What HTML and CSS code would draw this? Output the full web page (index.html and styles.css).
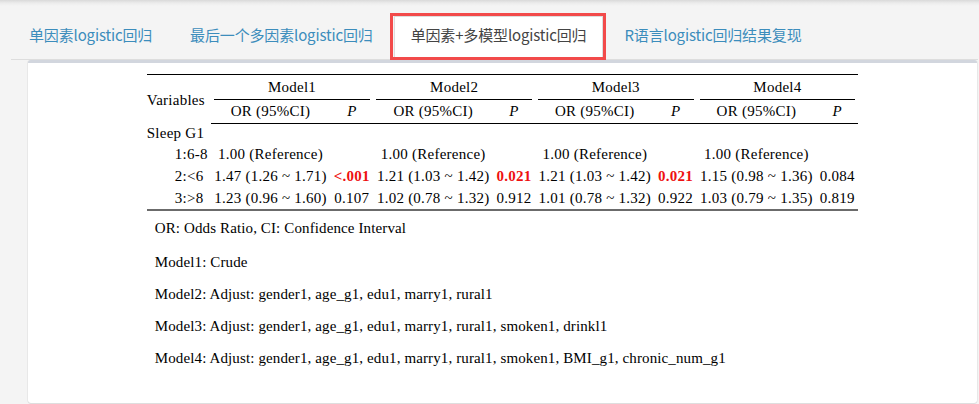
FILE: index.html
```html
<!DOCTYPE html>
<html lang="zh">
<head>
<meta charset="utf-8">
<title>单因素+多模型logistic回归</title>
<link rel="stylesheet" href="styles.css">
</head>
<body>
<div class="page">
  <ul class="tabs">
    <li class="tab">单因素logistic回归</li>
    <li class="tab">最后一个多因素logistic回归</li>
    <li class="tab active">单因素+多模型logistic回归</li>
    <li class="tab">R语言logistic回归结果复现</li>
  </ul>
  <div class="card">
    <div class="report">
      <table class="res">
        <thead>
          <tr class="top">
            <th rowspan="2" class="var">Variables</th>
            <th colspan="2" class="model"><div>Model1</div></th>
            <th colspan="2" class="model"><div>Model2</div></th>
            <th colspan="2" class="model"><div>Model3</div></th>
            <th colspan="2" class="model"><div>Model4</div></th>
          </tr>
          <tr class="sub">
            <th>OR (95%CI)</th><th class="p">P</th>
            <th>OR (95%CI)</th><th class="p">P</th>
            <th>OR (95%CI)</th><th class="p">P</th>
            <th>OR (95%CI)</th><th class="p">P</th>
          </tr>
        </thead>
        <tbody>
          <tr>
            <td class="var">Sleep G1</td>
            <td></td><td></td><td></td><td></td><td></td><td></td><td></td><td></td>
          </tr>
          <tr>
            <td class="lvl">1:6-8</td>
            <td>1.00 (Reference)</td><td></td>
            <td>1.00 (Reference)</td><td></td>
            <td>1.00 (Reference)</td><td></td>
            <td>1.00 (Reference)</td><td></td>
          </tr>
          <tr>
            <td class="lvl">2:&lt;6</td>
            <td>1.47 (1.26 ~ 1.71)</td><td class="sig">&lt;.001</td>
            <td>1.21 (1.03 ~ 1.42)</td><td class="sig">0.021</td>
            <td>1.21 (1.03 ~ 1.42)</td><td class="sig">0.021</td>
            <td>1.15 (0.98 ~ 1.36)</td><td>0.084</td>
          </tr>
          <tr>
            <td class="lvl">3:&gt;8</td>
            <td>1.23 (0.96 ~ 1.60)</td><td>0.107</td>
            <td>1.02 (0.78 ~ 1.32)</td><td>0.912</td>
            <td>1.01 (0.78 ~ 1.32)</td><td>0.922</td>
            <td>1.03 (0.79 ~ 1.35)</td><td>0.819</td>
          </tr>
        </tbody>
      </table>
      <div class="notes">
        <p>OR: Odds Ratio, CI: Confidence Interval</p>
        <p>Model1: Crude</p>
        <p>Model2: Adjust: gender1, age_g1, edu1, marry1, rural1</p>
        <p>Model3: Adjust: gender1, age_g1, edu1, marry1, rural1, smoken1, drinkl1</p>
        <p>Model4: Adjust: gender1, age_g1, edu1, marry1, rural1, smoken1, BMI_g1, chronic_num_g1</p>
      </div>
    </div>
  </div>
</div>
</body>
</html>
```
FILE: styles.css
```css
html, body {
  margin: 0;
  padding: 0;
}
body {
  background: linear-gradient(#d9d9d9 0, #ececec 3px, #f4f4f4 6px);
  background-color: #f4f4f4;
  height: 404px;
  overflow: hidden;
  font-family: "Noto Sans CJK SC", "Noto Sans", sans-serif;
}
.page {
  padding: 16px 1px 0 11px;
}
.tabs {
  list-style: none;
  margin: 0;
  padding: 0 0 0 1px;
  display: flex;
  gap: 4px;
  border-bottom: 1px solid #dddddd;
}
.tab {
  position: relative;
  padding: 7px 16px 13px;
  border: 1px solid transparent;
  border-bottom: none;
  font-size: 15px;
  letter-spacing: -0.15px;
  line-height: 22px;
  color: #3c8dbc;
  white-space: nowrap;
}
.tab.active {
  background: #ffffff;
  border-color: #dddddd;
  color: #444444;
  margin-bottom: -1px;
  padding-bottom: 14px;
}
.tab.active::after {
  content: "";
  position: absolute;
  left: -5px;
  right: -4px;
  top: -4px;
  bottom: 0;
  border: 3px solid #f24a4a;
}
.card {
  margin: 0 1px 0 17px;
  background: #ffffff;
  border-top: 3px solid #d2d6de;
  border-radius: 3px;
  box-shadow: 0 1px 1px rgba(0, 0, 0, 0.1), -1px 0 0 rgba(0, 0, 0, 0.04), 1px 0 0 rgba(0, 0, 0, 0.04);
  display: flex;
  justify-content: center;
  padding-top: 11px;
  box-sizing: border-box;
  height: 343px;
}
.report {
  font-family: "Liberation Serif", "Times New Roman", serif;
  font-size: 15px;
  letter-spacing: 0.25px;
  color: #000000;
}
.res {
  border-collapse: collapse;
  border-top: 1px solid #000000;
  border-bottom: 2px solid #6b6b6b;
}
.res th {
  font-weight: normal;
  padding: 0 3.5px;
  white-space: nowrap;
}
.res th.var {
  text-align: left;
  vertical-align: middle;
  padding: 2px 3px 0 0;
}
.res tr.top th.model {
  padding: 0;
}
.res tr.top th.model div {
  margin: 0 3px;
  line-height: 24px;
  border-bottom: 1px solid #000000;
  text-align: center;
}
.res tr.sub th {
  line-height: 23px;
  border-bottom: 1px solid #000000;
}
.res th.p {
  font-style: italic;
}
.res td {
  padding: 0 3.5px;
  line-height: 22px;
  text-align: center;
  white-space: nowrap;
}
.res td.var {
  text-align: left;
  padding: 0 3px 0 0;
  line-height: 19px;
}
.res td.lvl {
  text-align: left;
  padding: 0 3px 0 28px;
}
.res td.sig {
  color: #ee1111;
  font-weight: bold;
}
.notes {
  padding: 9px 0 0 8px;
  letter-spacing: 0.12px;
}
.notes p {
  margin: 0 0 15px;
  line-height: 17px;
}
.notes p:first-child {
  margin-bottom: 17px;
}
```
